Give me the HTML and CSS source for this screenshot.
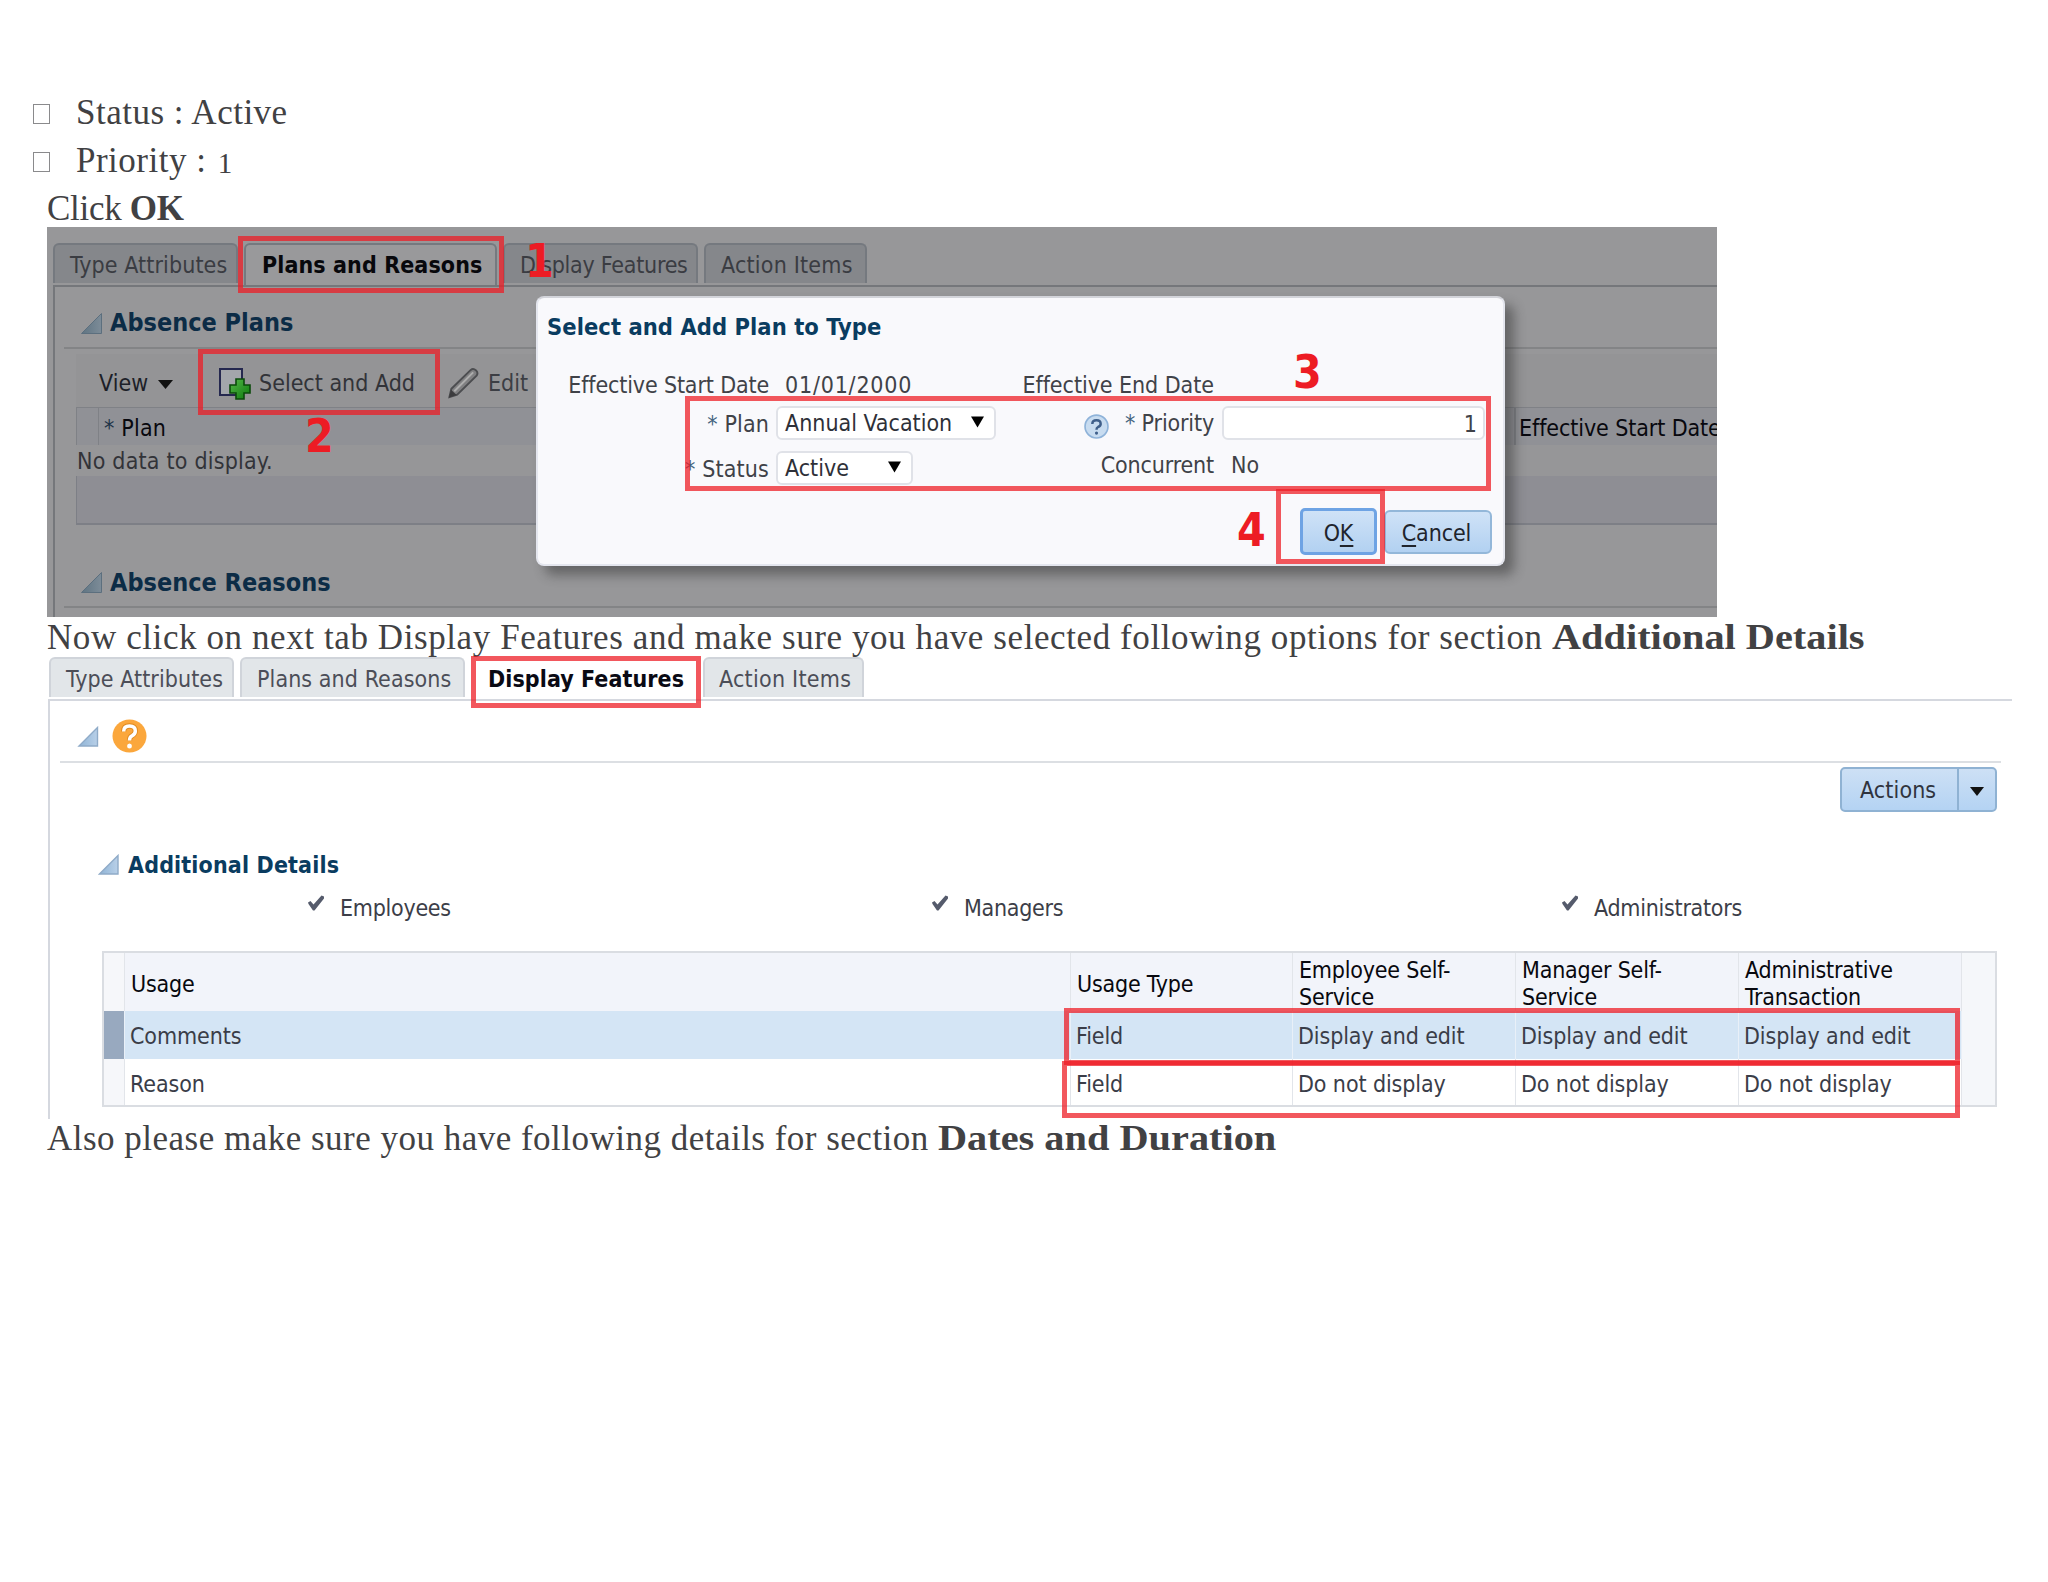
FILE: index.html
```
<!DOCTYPE html>
<html lang="en">
<head>
<meta charset="utf-8">
<title>Absence Type Setup</title>
<link rel="stylesheet" href="styles.css">
</head>
<body>
<svg width="0" height="0" class="defs">
  <defs>
    <linearGradient id="tri" x1="0" y1="0" x2="1" y2="0"><stop offset="0" stop-color="#8fb4d6"/><stop offset="1" stop-color="#b9d0e8"/></linearGradient>
    <linearGradient id="dimtri" x1="0" y1="0" x2="1" y2="0"><stop offset="0" stop-color="#5f7482"/><stop offset="1" stop-color="#7d8c98"/></linearGradient>
    <linearGradient id="green" x1="0" y1="0" x2="1" y2="1"><stop offset="0" stop-color="#56b84a"/><stop offset="1" stop-color="#0c7a0c"/></linearGradient>
    <symbol id="disclose" viewBox="0 0 21 21"><path d="M20 1.5V20H1.5Z" fill="url(#tri)" stroke="#8fabc8" stroke-width="1.4"/></symbol>
    <symbol id="disclose-dim" viewBox="0 0 21 21"><path d="M20.500 0.500V20.500H0.500Z" fill="url(#dimtri)" stroke="#5c6f7e" stroke-width="1"/></symbol>
    <symbol id="check" viewBox="0 0 18 16"><path d="M1 7.5L3.5 6L6.5 9.5L14.5 0.5L17 1.5L17 3.5L7.5 15.5L6 15.5L1.5 9Z" fill="#555b6c"/></symbol>
    <symbol id="down" viewBox="0 0 14 12"><path d="M0 0H14L7 12Z" fill="#000"/></symbol>
  </defs>
</svg>
<main class="doc">
  <ul class="list">
    <li><span class="box"></span>Status : Active</li>
    <li><span class="box"></span>Priority : <span class="oldstyle">1</span></li>
  </ul>
  <p class="line click">Click <b>OK</b></p>

  <section class="shot plans">
    <nav class="tabs">
      <span class="tab t1">Type Attributes</span>
      <span class="tab t2 active">Plans and Reasons</span>
      <span class="tab t3">Display Features</span>
      <span class="tab t4">Action Items</span>
    </nav>
    <div class="panel">
      <h2 class="head"><svg class="tri"><use href="#disclose-dim"/></svg>Absence Plans</h2>
      <div class="area">
        <div class="toolbar">
          <span class="view">View</span>
          <svg class="caret" viewBox="0 0 15 9"><path d="M0 0H15L7.5 9Z" fill="#111"/></svg>
          <svg class="add" viewBox="0 0 32 32"><path d="M1 1H23V27H1Z" fill="#a3a6ab" stroke="#25284f" stroke-width="2"/><path d="M17 11h8v6h6v8h-6v6h-8v-6h-6v-8h6z" fill="url(#green)" stroke="#0b4a0b" stroke-width="1.6"/></svg>
          <span class="select">Select and Add</span>
          <svg class="pencil" viewBox="0 0 32 32"><path d="M1.500 30.500L3.500 22L23.500 2.500Q26 0.500 29 3Q31.500 5.500 29.500 8.500L9.500 28Z" fill="#808082" stroke="#4c4d50" stroke-width="2"/><path d="M6.500 24.500L26 5" stroke="#adadad" stroke-width="2"/><path d="M1 31L3 23L9 28.500Z" fill="#3c3c3e"/></svg>
          <span class="edit">Edit</span>
        </div>
        <div class="grid-head"><span class="stub"></span><span class="col-plan"><i>*</i> Plan</span><span class="col-date">Effective Start Date</span></div>
        <div class="nodata">No data to display.</div>
        <div class="blank"></div>
      </div>
      <h2 class="head second"><svg class="tri"><use href="#disclose-dim"/></svg>Absence Reasons</h2>
    </div>

    <div class="dialog">
      <h3>Select and Add Plan to Type</h3>
      <div class="form">
        <label>Effective Start Date</label><span class="val">01/01/2000</span><label class="end">Effective End Date</label><span></span>
        <label class="low"><i>*</i> Plan</label><span class="drop plan">Annual Vacation<svg><use href="#down"/></svg></span>
        <label><svg class="help" viewBox="0 0 24 24"><circle cx="12" cy="12" r="11" fill="#c8dcf0" stroke="#8fb3d9" stroke-width="1.6"/><path d="M8 9.500Q8 6 12 6T16 9.500Q16 11.500 13.500 12.500Q12 13.300 12 15" fill="none" stroke="#3f5f8a" stroke-width="2.400"/><circle cx="12" cy="18.300" r="1.500" fill="#3f5f8a"/></svg><i>*</i> Priority</label><span class="input">1</span>
        <label class="low"><i>*</i> Status</label><span class="drop status">Active<svg><use href="#down"/></svg></span>
        <label class="conc">Concurrent</label><span class="val conc">No</span>
      </div>
      <div class="buttons"><span class="btn ok">O<u>K</u></span><span class="btn cancel"><u>C</u>ancel</span></div>
    </div>

    <div class="mark m1"></div><div class="mark m2"></div><div class="mark m3"></div><div class="mark m4"></div>
    <b class="num n1">1</b><b class="num n2">2</b><b class="num n3">3</b><b class="num n4">4</b>
  </section>

  <p class="line now">Now click on next tab Display Features and make sure you have selected following options for section <b class="wide">Additional Details</b></p>

  <section class="shot features">
    <nav class="tabs">
      <span class="tab f1">Type Attributes</span>
      <span class="tab f2">Plans and Reasons</span>
      <span class="tab f3 active">Display Features</span>
      <span class="tab f4">Action Items</span>
    </nav>
    <div class="panel">
      <div class="helprow">
        <svg class="tri"><use href="#disclose"/></svg>
        <svg class="orange" viewBox="0 0 36 34" preserveAspectRatio="none"><ellipse cx="18" cy="17" rx="17.500" ry="16.500" fill="#fba73c"/><path d="M12 12.500Q12 7 18 7T24 12Q24 15 20.500 16.800Q18 18 18 21.500" fill="none" stroke="#e08a1e" stroke-width="5.400"/><path d="M12 12.500Q12 7 18 7T24 12Q24 15 20.500 16.800Q18 18 18 21.500" fill="none" stroke="#fff" stroke-width="3.600"/><circle cx="18" cy="27" r="2.500" fill="#fff"/></svg>
      </div>
      <div class="actions"><span class="act">Actions</span><span class="arrow"><svg viewBox="0 0 14 9"><path d="M0 0H14L7 9Z" fill="#111"/></svg></span></div>
      <h2 class="subhead"><svg class="tri"><use href="#disclose"/></svg>Additional Details</h2>
      <div class="checks">
        <span class="c1"><svg><use href="#check"/></svg>Employees</span>
        <span class="c2"><svg><use href="#check"/></svg>Managers</span>
        <span class="c3"><svg><use href="#check"/></svg>Administrators</span>
      </div>
      <div class="usage">
        <div class="row header"><span></span><span>Usage</span><span>Usage Type</span><span class="two">Employee Self-<br>Service</span><span class="two">Manager Self-<br>Service</span><span class="two">Administrative<br>Transaction</span><span></span></div>
        <div class="row selected"><span></span><span>Comments</span><span>Field</span><span>Display and edit</span><span>Display and edit</span><span>Display and edit</span><span></span></div>
        <div class="row"><span></span><span>Reason</span><span>Field</span><span>Do not display</span><span>Do not display</span><span>Do not display</span><span></span></div>
      </div>
    </div>
    <div class="mark k1"></div><div class="mark k2"></div><div class="mark k3"></div>
  </section>

  <p class="line also">Also please make sure you have following details for section <b class="wide">Dates and Duration</b></p>
</main>
</body>
</html>
```
FILE: styles.css
```
* { box-sizing: border-box; }
body { margin: 0; background: #fff; color: #414143; font: 35px/48px "Liberation Serif", serif; white-space: nowrap; }
.defs { position: absolute; }
.doc { padding: 89px 0 0 47px; width: 2048px; height: 1582px; overflow: hidden; }
h2, h3, p, ul { margin: 0; padding: 0; }
ul { list-style: none; }
i { font-style: normal; color: #44647f; }

.list li { display: flex; align-items: center; height: 48px; margin-left: -14px; letter-spacing: .5px; white-space: pre; }
.box { width: 17px; height: 20px; border: 1px solid #8a8a8c; margin: 2px 26px 0 0; }
.oldstyle { font-size: 29px; padding: 4px 0 0 2px; }
.line { height: 48px; }
.click { height: 42px; line-height: 48px; letter-spacing: -.3px; }
.now { height: 39px; line-height: 42px; letter-spacing: .59px; }
.also { height: 40px; line-height: 40px; letter-spacing: .49px; }
.wide { display: inline-block; transform: scaleX(1.152); transform-origin: 0 50%; letter-spacing: 0; }

.shot { position: relative; font: 23px/40px "DejaVu Sans Condensed", "DejaVu Sans", sans-serif; }
.tabs { display: flex; }
.tab { height: 40px; border: 2px solid; border-bottom: 0; border-radius: 6px 6px 0 0; }
.tri { width: 21px; height: 21px; flex: none; }
.mark { position: absolute; border: 5.500px solid rgba(237, 28, 36, .74); }

/* Plans and Reasons */
.plans { width: 1670px; height: 390px; background: #979799; color: #323338; }
.plans .tabs { padding: 16px 0 0 6px; height: 58px; }
.plans .tab { background: #85878b; border-color: #75797f; color: #3a3c42; line-height: 41px; }
.plans .tab.active { height: 42px; background: #99999b; color: #08080c; font-weight: 700; letter-spacing: .1px; }
.t1 { width: 185px; padding-left: 15px; letter-spacing: .1px; }
.t2 { width: 253px; margin: 0 6px; padding-left: 16px; }
.t3 { width: 195px; padding-left: 15px; margin-right: 6px; letter-spacing: -.25px; }
.t4 { width: 163px; padding-left: 15px; letter-spacing: .2px; }
.plans .panel { margin-left: 6px; height: 332px; border: solid #75777b; border-width: 2px 0 0 2px; padding-top: 12px; }
.head { display: flex; align-items: center; height: 50px; line-height: 48px; margin-left: 9px; padding-left: 17px; border-bottom: 2px solid #838486; font-size: 25px; color: #0c2c46; }
.head .tri { margin-right: 8px; }
.area { margin: 5px 0 0 21px; }
.toolbar { display: flex; align-items: center; height: 53px; padding: 6px 0 1px 23px; background: #949496; }
.caret { width: 15px; height: 9px; margin: 3px 0 0 11px; }
.add { width: 32px; height: 32px; margin: 2px 8px 0 46px; }
.view { width: 48px; color: #1d1f28; }
.pencil { width: 31px; height: 32px; margin: 0 9px 0 33px; }
.select { width: 156px; }
.edit { color: #3c3e44; }
.grid-head { display: flex; height: 38px; line-height: 40px; border: solid #7f8186; border-width: 1px 0 0 1px; background: #909196; color: #08080e; overflow: hidden; }
.stub { width: 22px; border-right: 1px solid #7f8186; }
.col-plan { flex: none; width: 1415px; padding-left: 5px; letter-spacing: .2px; }
.col-plan i { color: #1e3448; }
.col-date { flex: 1; padding-left: 3px; border-left: 2px solid #7d7f84; overflow: hidden; letter-spacing: -.1px; }
.nodata { height: 31px; line-height: 32px; padding-left: 1px; background: #969698; letter-spacing: .2px; }
.blank { height: 49px; background: #8e8e94; border: solid #7d7f86; border-width: 0 0 2px 1px; }
.second { margin-top: 33px; padding-top: 1px; }

.dialog { position: absolute; left: 489px; top: 69px; width: 969px; height: 270px; background: #f9f9fc; border: 2px solid #e4e6ee; border-top-color: #d3d4da; border-radius: 8px; box-shadow: 9px 9px 12px rgba(40, 40, 40, .45); color: #404248; }
.dialog h3 { padding: 14px 0 0 9px; line-height: 30px; height: 72px; font-size: 23.500px; color: #0a3c60; letter-spacing: .04px; }
.form { display: grid; grid-template-columns: 231px 226px 219px 265px; grid-template-rows: 36px 45px 32px; line-height: 34px; }
.form > :nth-child(-n+4) { line-height: 30px; }
label { text-align: right; letter-spacing: -.15px; }
.form .end { letter-spacing: -.05px; }
label.low { padding-top: 1px; letter-spacing: .15px; }
.conc { margin-top: -3px; }
.val { padding-left: 16px; letter-spacing: .8px; }
.val.conc { padding-left: 17px; letter-spacing: 0; }
.drop { height: 34px; margin-left: 7px; padding-left: 7px; background: #fff; border: 2px solid #e0e2e8; border-radius: 6px; line-height: 33px; color: #2e3038; display: flex; justify-content: space-between; align-items: center; padding-right: 10px; }
.drop svg { width: 13px; height: 12px; margin-bottom: 3px; }
.plan { width: 220px; }
.status { width: 137px; }
.input { height: 34px; margin-left: 8px; width: 263px; background: #fff; border: 2px solid #e0e2e8; border-radius: 6px; text-align: right; line-height: 33px; padding-right: 6px; }
.help { width: 25px; height: 25px; vertical-align: -8px; margin-right: 16px; }
.buttons { display: flex; justify-content: flex-end; align-items: center; margin-top: 25px; padding-right: 11px; }
.btn { background: linear-gradient(#cfe2f7, #b2d1f1); color: #20242c; text-align: center; text-underline-offset: 4px; text-decoration-thickness: 2px; letter-spacing: -.1px; }
.ok { width: 77px; height: 47px; line-height: 44px; border: 3px solid #6ea3e4; border-radius: 5px; margin-right: 7px; }
.cancel { width: 108px; height: 44px; line-height: 43px; border: 2px solid #93b7d9; border-radius: 6px; padding-right: 3px; }

.m1 { left: 191px; top: 9px; width: 266px; height: 57px; }
.m2 { left: 151px; top: 122px; width: 242px; height: 66px; }
.m3 { left: 638px; top: 169px; width: 806px; height: 95px; }
.m4 { left: 1229px; top: 262px; width: 109px; height: 75px; }
.num { position: absolute; color: #ed1c24; font-size: 46px; line-height: 46px; }
.n1 { left: 478px; top: 11px; }
.n2 { left: 258px; top: 186px; }
.n3 { left: 1246px; top: 122px; }
.n4 { left: 1190px; top: 280px; }

/* Display Features */
.features { height: 463px; }
.features .tabs { height: 43px; padding: 1px 0 0 2px; }
.features .tab { background: #e2e6e9; border-color: #d0d4da; color: #4c4e58; line-height: 41px; letter-spacing: .08px; }
.features .tab.active { background: #fff; border-color: #fff; color: #0a0a14; font-weight: 700; }
.f1 { width: 185px; padding-left: 15px; margin-right: 6px; }
.f2 { width: 225px; padding-left: 15px; }
.f3 { width: 227px; margin: 0 5px 0 6px; padding-left: 15px; }
.features .f4 { width: 161px; padding-left: 14px; letter-spacing: .25px; }
.features .panel { height: 420px; margin: 0 36px 0 1px; border: solid #d5d8df; border-width: 2px 0 0 2px; padding: 0 0 0 10px; }
.helprow { display: flex; align-items: center; height: 62px; width: 1941px; padding: 11px 0 0 17px; border-bottom: 2px solid #dcdfe3; }
.helprow .tri { width: 22px; }
.orange { width: 35px; height: 34px; margin: -1px 0 0 13px; }
.actions { display: flex; width: 157px; height: 45px; margin: 4px 0 0 1780px; line-height: 42px; border: 2px solid #8fb2d3; border-radius: 5px; background: linear-gradient(#cde0f5, #b4d3f3); color: #30343e; letter-spacing: .1px; }
.act { width: 115px; padding-left: 18px; }
.arrow { flex: 1; border-left: 2px solid #8fb2d3; display: flex; align-items: center; justify-content: center; }
.arrow svg { width: 14px; height: 9px; margin-top: 4px; }
.subhead { display: flex; align-items: center; margin: 33px 0 0 38px; font-size: 23px; line-height: 40px; color: #0a3c60; letter-spacing: .15px; }
.subhead .tri { margin: -1px 9px 0 0; }
.checks { display: flex; line-height: 30px; margin: 8px 0 0 247px; letter-spacing: -.27px; color: #3c3e48; }
.checks svg { width: 18px; height: 16px; margin-right: 15px; vertical-align: 5px; }
.c1 { width: 624px; }
.c2 { width: 630px; }
.usage { width: 1895px; margin: 28px 0 0 42px; border: 2px solid #dadde2; height: 156px; }
.row { display: grid; grid-template-columns: 21px 946px 222px 223px 223px 223px 1fr; grid-template-rows: 100%; height: 46px; line-height: 50px; color: #3a3d48; letter-spacing: -.1px; }
.row > span { padding-left: 5px; border-right: 1px solid #e2e5ea; }
.row > span:last-child { background: #f5f7fa; border: 0; }
.row > span:first-child { background: #f6f7fa; }
.header { height: 58px; line-height: 54px; background: #f2f4fa; color: #08080e; letter-spacing: -.2px; }
.header > span { padding: 4px 0 0 6px; }
.header > .two { line-height: 27px; }
.selected { height: 48px; line-height: 50px; background: #d4e5f5; }
.selected > span { border-color: #e9f0f8; }
.row.selected > span:first-child { background: #98a9bf; }

.k1 { left: 424px; top: 0; width: 230px; height: 52px; }
.k2 { left: 1017px; top: 352px; width: 896px; height: 57px; }
.k3 { left: 1015px; top: 405px; width: 898px; height: 57px; }
```
